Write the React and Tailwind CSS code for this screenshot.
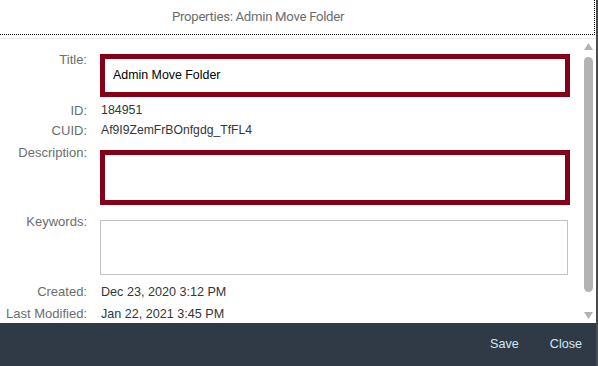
import React from "react";

const font = { fontFamily: '"Liberation Sans", Arial, sans-serif' };

const Label = ({ children, className = "" }) => (
  <div className={`w-[87px] shrink-0 text-right text-[13px] text-[#6a6d70] ${className}`}>
    {children}
  </div>
);

const App = () => {
  return (
    <div
      className="w-[598px] h-[366px] flex flex-col bg-white border-r-2 border-[#4b4b4b] overflow-hidden"
      style={font}
    >
      {/* Header */}
      <div className="h-[39px] shrink-0 border-b border-[#e8e8e8]">
        <div
          className="h-[35px] w-[595px] border-b border-r border-dotted border-black flex items-center pl-[172px] text-[13.2px] tracking-[-0.3px] text-[#6a6d70]"
          style={{ fontFamily: "Roboto, sans-serif" }}
        >
          Properties: Admin Move Folder
        </div>
      </div>

      {/* Body */}
      <div className="flex-1 flex min-h-0">
        <div className="flex-1 flex flex-col overflow-hidden">
          {/* Title */}
          <div className="flex items-start mt-[13px]">
            <Label className="leading-[16px]">Title:</Label>
            <div className="ml-[13px] mt-[2px] w-[470px] h-[43px] border-[5px] border-[#870019] flex items-center pl-[8px] text-[12.4px] text-black">
              Admin Move Folder
            </div>
          </div>

          {/* ID */}
          <div className="flex items-center mt-[4px] h-[20px]">
            <Label>ID:</Label>
            <div className="ml-[14px] text-[12.4px] text-[#32363a]">184951</div>
          </div>

          {/* CUID */}
          <div className="flex items-center h-[20px]">
            <Label>CUID:</Label>
            <div className="ml-[14px] text-[12.2px] text-[#32363a]">Af9I9ZemFrBOnfgdg_TfFL4</div>
          </div>

          {/* Description */}
          <div className="flex items-start mt-[5px]">
            <Label className="leading-[16px]">Description:</Label>
            <div className="ml-[13px] mt-[5px] w-[470px] h-[55px] border-[5px] border-[#870019]" />
          </div>

          {/* Keywords */}
          <div className="flex items-start mt-[9px]">
            <Label className="leading-[16px]">Keywords:</Label>
            <div className="ml-[13px] mt-[6px] w-[468px] h-[55px] border border-[#c2c2c2]" />
          </div>

          {/* Created */}
          <div className="flex items-center mt-[7px] h-[20px] shrink-0">
            <Label>Created:</Label>
            <div className="ml-[14px] text-[12.6px] text-[#32363a]">Dec 23, 2020 3:12 PM</div>
          </div>

          {/* Last Modified */}
          <div className="flex items-center mt-[2px] h-[20px] shrink-0">
            <Label>Last Modified:</Label>
            <div className="ml-[14px] text-[12.6px] text-[#32363a]">Jan 22, 2021 3:45 PM</div>
          </div>
        </div>

        {/* Scrollbar */}
        <div className="w-[11px] mr-[2px] flex flex-col items-center pt-[4px] pb-[4px]">
          <svg width="9" height="7" viewBox="0 0 9 7">
            <path d="M4.5 0 L9 7 L0 7 Z" fill="#b3b3b3" />
          </svg>
          <div className="w-[9px] mt-[7px] h-[235px] rounded-full bg-[#b3b3b3]" />
          <div className="flex-1" />
          <svg width="9" height="7" viewBox="0 0 9 7">
            <path d="M0 0 L9 0 L4.5 7 Z" fill="#b3b3b3" />
          </svg>
        </div>
      </div>

      {/* Footer */}
      <div className="h-[43px] shrink-0 bg-[#2f3a46] flex items-center justify-end pr-[14px] text-[12.6px] text-[#d4e6f8]">
        <button className="mr-[31px]">Save</button>
        <button>Close</button>
      </div>
    </div>
  );
};

export default App;
